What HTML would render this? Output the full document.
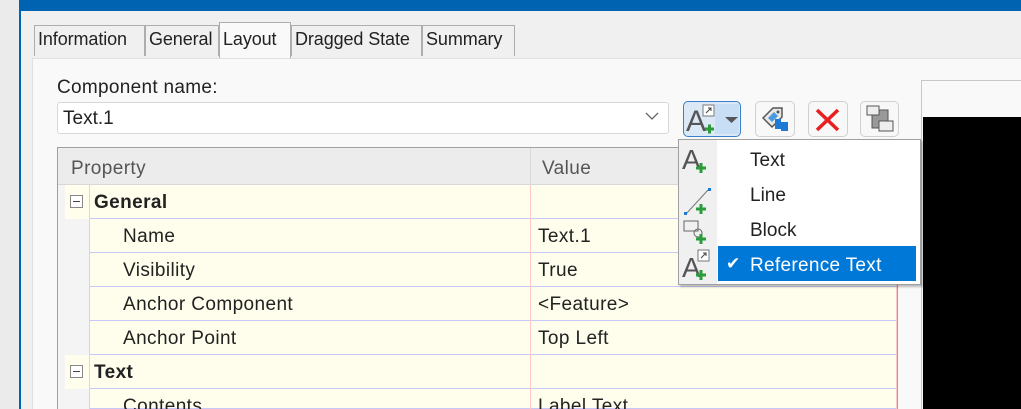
<!DOCTYPE html>
<html><head><meta charset="utf-8"><style>
*{margin:0;padding:0;box-sizing:border-box}
html,body{width:1021px;height:409px;overflow:hidden}
body{background:#f0f0f0;font-family:"Liberation Sans",sans-serif;font-size:19px;color:#222;position:relative}
.a{position:absolute;white-space:nowrap}
.tab{position:absolute;top:25px;height:31px;border:1px solid #adadad;border-bottom:none;background:#f0f0f0;padding:3px 3px;font-size:18px;white-space:nowrap;overflow:hidden;letter-spacing:-0.1px}
.row{position:absolute;left:90px;width:807px;height:34px;background:#fffeec;border-bottom:1px solid #c8c8f8}
.row span{position:absolute;top:7px;white-space:nowrap;letter-spacing:0.4px}
.btn{position:absolute;top:101px;height:36px;border:1px solid #d0d0d0;border-radius:5px;background:#f8f8f8}
.mi{position:absolute;left:750px;font-size:19px;white-space:nowrap}
</style></head><body>
<div class="a" style="left:0;top:0;width:20px;height:409px;background:#ebebeb"></div>
<div class="a" style="left:19px;top:0;width:1002px;height:11px;background:#0063b1"></div>
<div class="a" style="left:19px;top:0;width:2px;height:409px;background:#0063b1"></div>
<div class="tab" style="left:34px;width:111px">Information</div>
<div class="tab" style="left:145px;width:74px">General</div>
<div class="tab" style="left:219px;top:22px;height:37px;width:72px;background:#f9f9f9;padding-top:6px">Layout</div>
<div class="tab" style="left:291px;width:131px">Dragged State</div>
<div class="tab" style="left:422px;width:93px">Summary</div>
<div class="a" style="left:32px;top:58px;width:989px;height:351px;background:#f9f9f9;border-top:1px solid #e0e0e0;border-left:1px solid #e0e0e0"></div>
<div class="a" style="left:57px;top:77px;letter-spacing:0.3px">Component name:</div>
<div class="a" style="left:57px;top:102px;width:612px;height:32px;background:#fff;border:1px solid #d8d8d8;border-radius:3px;padding:5px 5px">Text.1</div>
<svg class="a" style="left:645px;top:112px" width="14" height="9"><path d="M1 1l6 6 6-6" fill="none" stroke="#666" stroke-width="1.3"/></svg>
<div class="btn" style="left:683px;width:58px;border:1px solid #3a7fc8;background:#dbe9f7"></div>
<div class="a" style="left:715px;top:104px;width:24px;height:30px;background:#c7def4"></div>
<svg class="a" style="left:685px;top:102px" width="58" height="34">
<text x="1" y="29" font-family="Liberation Sans" font-size="30" fill="#555">A</text>
<rect x="18" y="3" width="11" height="11" fill="#fff" stroke="#777"/><path d="M21 11l5-5M23 6h3v3" stroke="#444" fill="none"/>
<path d="M20 27h9M24.5 22.5v9" stroke="#2a9d3a" stroke-width="3"/>
<path d="M40 15h13l-6.5 6z" fill="#555"/></svg>
<div class="btn" style="left:755px;width:40px"></div>
<svg class="a" style="left:759px;top:104px" width="34" height="30"><path d="M4 14l10-10h9v9l-10 10z" fill="#e8e8e8" stroke="#555" stroke-width="1.5"/><path d="M9 14l6-6 4 4-6 6z" fill="#4a9ae0"/><circle cx="19" cy="8" r="1.5" fill="#555"/><rect x="16" y="15" width="6" height="10" fill="#1d7ad4"/><rect x="22" y="18" width="7" height="9" fill="#1d7ad4"/></svg>
<div class="btn" style="left:808px;width:40px"></div>
<svg class="a" style="left:814px;top:107px" width="28" height="26"><path d="M3 3l21 20M24 3L3 23" stroke="#e82020" stroke-width="3.5"/></svg>
<div class="btn" style="left:860px;width:39px"></div>
<svg class="a" style="left:865px;top:104px" width="30" height="30"><rect x="7" y="6" width="16" height="18" fill="#999" stroke="#555"/><rect x="2" y="2" width="12" height="9" fill="#eee" stroke="#555"/><rect x="14" y="17" width="14" height="10" fill="#eee" stroke="#555"/></svg>
<div class="a" style="left:921px;top:80px;width:100px;height:329px;border-left:1px solid #c8c8c8;border-top:1px solid #c8c8c8;background:#f9f9f9"></div>
<div class="a" style="left:923px;top:117px;width:98px;height:292px;background:#000"></div>
<div class="a" style="left:57px;top:147px;width:841px;height:262px;border:1px solid #a0a0a0;border-bottom:none;background:#f4f4f4"></div>
<div class="a" style="left:58px;top:148px;width:839px;height:37px;background:#ececec;border-bottom:1px solid #d8d8d8"></div>
<div class="a" style="left:71px;top:158px;color:#555;letter-spacing:0.4px">Property</div>
<div class="a" style="left:530px;top:148px;width:1px;height:37px;background:#d8d8d8"></div>
<div class="a" style="left:542px;top:158px;color:#555;letter-spacing:0.4px">Value</div>
<div class="row" style="top:185px"><span style="left:4px;font-weight:bold">General</span></div>
<div class="row" style="top:219px"><span style="left:33px">Name</span><span style="left:448px">Text.1</span></div>
<div class="row" style="top:253px"><span style="left:33px">Visibility</span><span style="left:448px">True</span></div>
<div class="row" style="top:287px"><span style="left:33px">Anchor Component</span><span style="left:448px">&lt;Feature&gt;</span></div>
<div class="row" style="top:321px"><span style="left:33px">Anchor Point</span><span style="left:448px">Top Left</span></div>
<div class="row" style="top:355px"><span style="left:4px;font-weight:bold">Text</span></div>
<div class="row" style="top:389px;height:20px"><span style="left:33px">Contents</span><span style="left:448px">Label Text</span></div>
<div class="a" style="left:65px;top:185px;width:25px;height:34px;background:#fffeec"></div>
<div class="a" style="left:65px;top:355px;width:25px;height:34px;background:#fffeec"></div>
<div class="a" style="left:70px;top:195px;width:13px;height:13px;border:1px solid #888;background:#fff"><div class="a" style="left:2px;top:5px;width:7px;height:1px;background:#444"></div></div>
<div class="a" style="left:70px;top:365px;width:13px;height:13px;border:1px solid #888;background:#fff"><div class="a" style="left:2px;top:5px;width:7px;height:1px;background:#444"></div></div>
<div class="a" style="left:89px;top:185px;width:1px;height:224px;background:#ffc8c8"></div>
<div class="a" style="left:530px;top:185px;width:1px;height:224px;background:#ffc8c8"></div>
<div class="a" style="left:896px;top:185px;width:1px;height:224px;background:#ffc8c8"></div>
<div class="a" style="left:678px;top:139px;width:243px;height:146px;background:#fff;border:1px solid #a0a0a0;box-shadow:2px 2px 2px rgba(0,0,0,.25)"></div>
<div class="a" style="left:679px;top:140px;width:38px;height:144px;background:#f0f0f0"></div>
<div class="a" style="left:718px;top:246px;width:198px;height:35px;background:#0078d7"></div>
<div class="mi" style="top:150px">Text</div>
<div class="mi" style="top:185px">Line</div>
<div class="mi" style="top:220px">Block</div>
<div class="mi" style="top:255px;color:#fff;letter-spacing:0.3px">Reference Text</div>
<div class="a" style="left:726px;top:254px;color:#fff;font-size:17px">✔</div>
<svg class="a" style="left:680px;top:142px" width="38" height="142">
<text x="2" y="27" font-family="Liberation Sans" font-size="28" fill="#555">A</text>
<path d="M16 26h10M21 21v10" stroke="#2a9d3a" stroke-width="3"/>
<path d="M6 72l22-24" stroke="#777" stroke-width="1"/><rect x="4" y="70" width="3" height="3" fill="#1d7ad4"/><rect x="28" y="46" width="3" height="3" fill="#1d7ad4"/>
<path d="M16 67h10M21 62v10" stroke="#2a9d3a" stroke-width="3"/>
<rect x="4" y="79" width="14" height="10" fill="none" stroke="#666"/><circle cx="18" cy="91" r="4" fill="none" stroke="#666"/>
<path d="M16 97h10M21 92v10" stroke="#2a9d3a" stroke-width="3"/>
<text x="2" y="135" font-family="Liberation Sans" font-size="28" fill="#555">A</text>
<rect x="18" y="108" width="11" height="11" fill="#fff" stroke="#777"/><path d="M21 116l5-5M23 111h3v3" stroke="#444" fill="none"/>
<path d="M16 133h10M21 128v10" stroke="#2a9d3a" stroke-width="3"/>
</svg>
</body></html>
